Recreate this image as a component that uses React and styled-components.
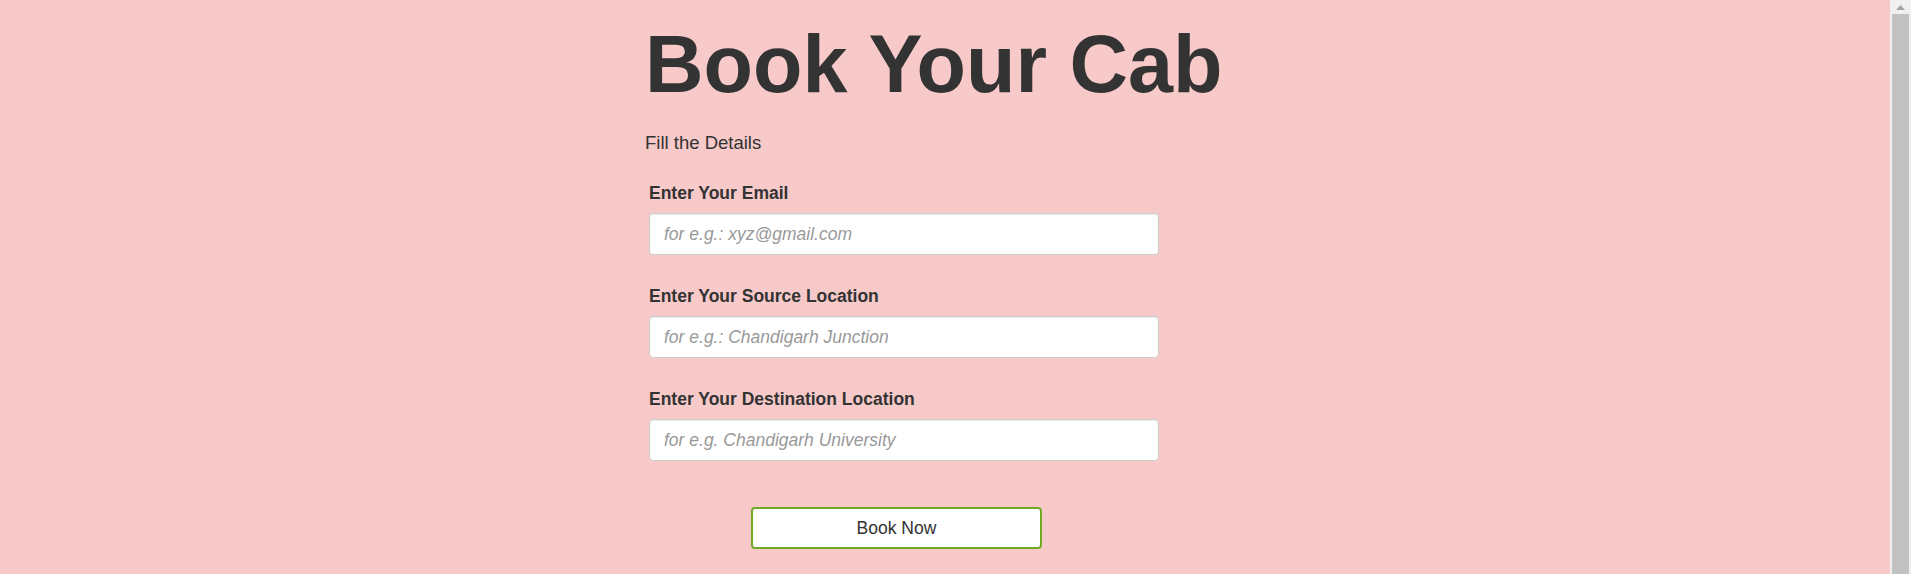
import React from "react";
import styled, { createGlobalStyle } from "styled-components";

const GlobalStyle = createGlobalStyle`
  html, body {
    margin: 0;
    padding: 0;
  }
  body {
    background: #f7c9c9;
    font-family: "Liberation Sans", Arial, sans-serif;
    color: #333;
    padding-right: 21px;
  }
  * { box-sizing: border-box; }
`;

const Page = styled.main`
  width: 600px;
  margin: 0 auto;
  padding: 20px 0 44px;
`;

const Title = styled.h1`
  margin: 0;
  font-size: 81px;
  line-height: 88px;
  font-weight: 700;
  color: #333;
`;

const Subtitle = styled.p`
  margin: 22px 0 0;
  font-size: 18.5px;
  line-height: 26px;
`;

const Form = styled.form`
  display: flex;
  flex-direction: column;
  padding-left: 4px;
  margin-top: 25px;
`;

const Group = styled.div`
  display: flex;
  flex-direction: column;
  width: 510px;
  margin-bottom: ${(p) => (p.$last ? "46px" : "29px")};
`;

const Label = styled.label`
  font-size: 17.5px;
  line-height: 24px;
  font-weight: 700;
  margin-bottom: 8px;
`;

const Input = styled.input`
  height: 42px;
  width: 100%;
  padding: 0 14px;
  font-family: "Liberation Sans", Arial, sans-serif;
  font-size: 17.5px;
  color: #555;
  background: #fff;
  border: 1px solid #ccc;
  border-radius: 4px;
  box-shadow: inset 0 1px 1px rgba(0, 0, 0, 0.075);
  outline: none;

  &::placeholder {
    color: #999;
    font-style: italic;
  }
`;

const ButtonRow = styled.div`
  display: flex;
  justify-content: center;
  width: 495px;
`;

const BookButton = styled.button`
  width: 291px;
  height: 42px;
  background: #fff;
  border: 2px solid #6fab22;
  border-radius: 4px;
  font-family: "Liberation Sans", Arial, sans-serif;
  font-size: 17.5px;
  color: #333;
  cursor: pointer;
`;

/* Decorative replica of the browser's vertical scrollbar (overlay). */
const ScrollTrack = styled.div`
  position: fixed;
  top: 0;
  right: 0;
  width: 21px;
  height: 100vh;
  background: #f0f0f0;
  display: flex;
  flex-direction: column;
  align-items: center;
`;

const ScrollArrow = styled.div`
  height: 14px;
  display: flex;
  align-items: center;
  justify-content: center;
`;

const ScrollThumb = styled.div`
  flex: 1;
  width: 17px;
  background: #c1c1c1;
`;

const fields = [
  { id: "email", label: "Enter Your Email", placeholder: "for e.g.: xyz@gmail.com", type: "email" },
  { id: "source", label: "Enter Your Source Location", placeholder: "for e.g.: Chandigarh Junction", type: "text" },
  { id: "dest", label: "Enter Your Destination Location", placeholder: "for e.g. Chandigarh University", type: "text" },
];

export default function App() {
  return (
    <>
      <GlobalStyle />
      <Page>
        <Title>Book Your Cab</Title>
        <Subtitle>Fill the Details</Subtitle>
        <Form onSubmit={(e) => e.preventDefault()}>
          {fields.map((f, i) => (
            <Group key={f.id} $last={i === fields.length - 1}>
              <Label htmlFor={f.id}>{f.label}</Label>
              <Input id={f.id} type={f.type} placeholder={f.placeholder} />
            </Group>
          ))}
          <ButtonRow>
            <BookButton type="submit">Book Now</BookButton>
          </ButtonRow>
        </Form>
      </Page>
      <ScrollTrack aria-hidden="true">
        <ScrollArrow>
          <svg width="9" height="5" viewBox="0 0 9 5">
            <path d="M4.5 0 L9 5 L0 5 Z" fill="#a3a3a3" />
          </svg>
        </ScrollArrow>
        <ScrollThumb />
      </ScrollTrack>
    </>
  );
}
